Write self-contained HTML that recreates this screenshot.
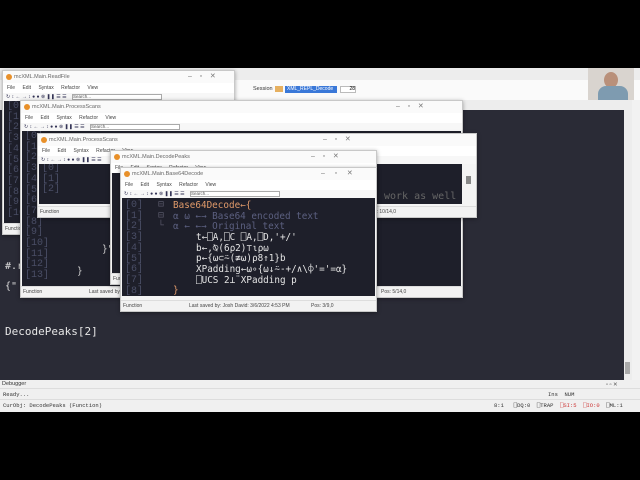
<!DOCTYPE html>
<html><head><meta charset="utf-8"><style>
*{margin:0;padding:0;box-sizing:border-box}
body{width:640px;height:480px;background:#000;position:relative;overflow:hidden;font-family:"Liberation Sans",sans-serif}
.a{position:absolute}
.win{position:absolute;background:#f4f4f4;border:1px solid #c8c8c8;box-shadow:0 1px 4px rgba(0,0,0,.35);overflow:hidden}
.tt{position:absolute;left:0;top:0;right:0;height:12px;background:#fafafa;font-size:5.5px;color:#666;line-height:12px;padding-left:11px}
.tt:before{content:"";position:absolute;left:3px;top:3px;width:6px;height:6px;border-radius:50%;background:#e8902a}
.ctl{position:absolute;top:0;font-size:7px;color:#777;line-height:12px}
.mn{position:absolute;left:0;top:12px;right:0;height:10px;background:#fff;font-size:5px;color:#444;line-height:10px;padding-left:4px;word-spacing:6px}
.tl{position:absolute;left:0;top:22px;right:0;height:8px;background:#f7f7f7;font-size:5px;color:#335;line-height:8px;padding-left:3px;white-space:nowrap;overflow:hidden}
.sr{display:inline-block;width:90px;height:6px;border:1px solid #aaa;background:#fff;vertical-align:middle;margin-left:4px;font-size:4.5px;line-height:4px;color:#555}
.cd{position:absolute;left:1px;right:1px;top:30px;background:#1e1f2a;overflow:hidden}
.st{position:absolute;left:0;right:0;bottom:0;height:11px;background:#f2f2f2;border-top:1px solid #ddd;font-size:5px;color:#444;line-height:11px;padding-left:2px}
.g{position:absolute;font-family:"Liberation Mono","DejaVu Sans Mono",monospace;font-size:10px;color:#4a4e66;line-height:10.7px;white-space:pre}
.c{position:absolute;font-family:"DejaVu Sans Mono","Liberation Mono",monospace;font-size:9.3px;line-height:10.7px;white-space:pre}
</style></head><body>
<!-- main app top area -->
<div class="a" style="left:0;top:68px;width:640px;height:344px;background:#ededed"></div>
<div class="a" style="left:0;top:80px;width:640px;height:20px;background:#fafafa"></div>
<div class="a" style="left:253px;top:86px;font-size:5.5px;color:#333">Session</div>
<div class="a" style="left:275px;top:86px;width:8px;height:6px;background:#e6b060"></div>
<div class="a" style="left:285px;top:86px;width:52px;height:7px;background:#3a78d8;font-size:5px;color:#fff;line-height:7px;padding-left:2px">XML_REPL_Decode</div>
<div class="a" style="left:340px;top:86px;width:16px;height:7px;border:1px solid #bbb;background:#fff;font-size:5px;line-height:5px;text-align:right">28</div>
<div class="a" style="left:588px;top:68px;width:46px;height:32px;background:#d9d4cf"></div>
<div class="a" style="left:604px;top:72px;width:14px;height:16px;border-radius:50%;background:#b9907a"></div>
<div class="a" style="left:598px;top:86px;width:30px;height:14px;border-radius:8px 8px 0 0;background:#7e9bb0"></div>
<!-- main dark session -->
<div class="a" style="left:0;top:110px;width:624px;height:270px;background:#2a2b36"></div>
<div class="a" style="left:625px;top:362px;width:5px;height:12px;background:#aaa"></div>
<div class="a" style="left:632px;top:100px;width:8px;height:280px;background:#f2f2f2"></div>
<div class="c" style="left:5px;top:262px;color:#ddd;font-size:10px">#.r</div>
<div class="c" style="left:5px;top:282px;color:#ddd;font-size:10px">{"</div>
<div class="c" style="left:5px;top:327px;color:#e6e6e6;font-size:11px">DecodePeaks[2]</div>
<!-- debugger bar -->
<div class="a" style="left:0;top:380px;width:640px;height:32px;background:#f0f0f0"></div>
<div class="a" style="left:2px;top:381px;font-size:5.5px;color:#333">Debugger</div>
<div class="a" style="left:0;top:388px;width:640px;height:1px;background:#ddd"></div>
<div class="a" style="left:3px;top:391px;font-size:5.5px;color:#333;font-family:'Liberation Mono',monospace">Ready...</div>
<div class="a" style="left:0;top:399px;width:640px;height:1px;background:#ddd"></div>
<div class="a" style="left:3px;top:402px;font-size:5.5px;color:#333;font-family:'Liberation Mono',monospace">CurObj: DecodePeaks (Function)</div>
<div class="a" style="left:548px;top:391px;font-size:5.5px;color:#333;font-family:'Liberation Mono',monospace">Ins &nbsp;NUM</div>
<div class="a" style="left:494px;top:402px;font-size:5.5px;color:#333;font-family:'Liberation Mono',monospace;white-space:pre">8:1   ⎕DQ:0  ⎕TRAP  <span style="color:#c33">⎕SI:5  ⎕IO:0</span>  ⎕ML:1</div>
<div class="a" style="left:606px;top:382px;font-size:5.5px;color:#555">▫ ▫ ✕</div>

<!-- W1 -->
<div class="win" style="left:2px;top:70px;width:233px;height:165px">
<div class="tt">mcXML.Main.ReadFile</div><div class="ctl" style="left:185px">–&nbsp;&nbsp;&nbsp;&nbsp;▫&nbsp;&nbsp;&nbsp;&nbsp;✕</div>
<div class="mn">File Edit Syntax Refactor View</div>
<div class="tl">↻ ↕ ← → ↕ ● ● ⊗ ❚❚ ☰ ☰ <span class="sr">Search...</span></div>
<div class="cd" style="height:122px"><div class="g" style="left:3px;top:1px">[0]
[1]
[2]
[3]
[4]
[5]
[6]
[7]
[8]
[9]
[10]</div></div>
<div class="st">Function</div></div>

<!-- W2 -->
<div class="win" style="left:20px;top:100px;width:443px;height:198px">
<div class="tt">mcXML.Main.ProcessScans</div><div class="ctl" style="left:375px">–&nbsp;&nbsp;&nbsp;&nbsp;▫&nbsp;&nbsp;&nbsp;&nbsp;✕</div>
<div class="mn">File Edit Syntax Refactor View</div>
<div class="tl">↻ ↕ ← → ↕ ● ● ⊗ ❚❚ ☰ ☰ <span class="sr">Search...</span></div>
<div class="cd" style="height:155px"><div class="g" style="left:3px;top:1px">[0]
[1]
[2]
[3]
[4]
[5]
[6]
[7]
[8]
[9]
[10]
[11]
[12]
[13]</div>
<div class="c" style="left:80px;top:114px;color:#ccc">}"</div>
<div class="c" style="left:55px;top:136px;color:#ccc">}</div></div>
<div class="st">Function<span style="position:absolute;left:68px">Last saved by:</span><span style="position:absolute;left:360px">Pos: 5/14,0</span></div></div>

<!-- W3 -->
<div class="win" style="left:37px;top:133px;width:440px;height:85px">
<div class="tt">mcXML.Main.ProcessScans</div><div class="ctl" style="left:285px">–&nbsp;&nbsp;&nbsp;&nbsp;▫&nbsp;&nbsp;&nbsp;&nbsp;✕</div>
<div class="mn">File Edit Syntax Refactor View</div>
<div class="tl">↻ ↕ ← → ↕ ● ● ⊗ ❚❚ ☰ ☰</div>
<div class="cd" style="height:40px;right:14px"><div class="g" style="left:3px;top:0px">[0]
[1]
[2]</div>
<div class="c" style="left:345px;top:28px;color:#666;font-size:10px">work as well</div></div>
<div class="a" style="right:5px;top:42px;width:5px;height:8px;background:#888"></div>
<div class="st">Function<span style="position:absolute;left:330px">Pos: 10/14,0</span></div></div>

<!-- W4 -->
<div class="win" style="left:110px;top:150px;width:267px;height:135px">
<div class="tt">mcXML.Main.DecodePeaks</div><div class="ctl" style="left:200px">–&nbsp;&nbsp;&nbsp;&nbsp;▫&nbsp;&nbsp;&nbsp;&nbsp;✕</div>
<div class="mn">File Edit Syntax Refactor View</div>
<div class="cd" style="top:22px;height:100px"></div>
<div class="st">Fun</div></div>

<!-- W5 -->
<div class="win" style="left:120px;top:167px;width:257px;height:145px">
<div class="tt">mcXML.Main.Base64Decode</div><div class="ctl" style="left:200px">–&nbsp;&nbsp;&nbsp;&nbsp;&nbsp;▫&nbsp;&nbsp;&nbsp;&nbsp;&nbsp;✕</div>
<div class="mn">File Edit Syntax Refactor View</div>
<div class="tl">↻ ↕ ← → ↕ ● ● ⊗ ❚❚ ☰ ☰ <span class="sr">Search...</span></div>
<div class="cd" style="height:98px"><div class="g" style="left:3px;top:3px">[0]
[1]
[2]
[3]
[4]
[5]
[6]
[7]
[8]</div>
<div class="g" style="left:36px;top:3px;color:#556">⊟
⊟
└</div>
<div class="c" style="left:51px;top:3px;color:#e09a6a">Base64Decode←{</div>
<div class="c" style="left:51px;top:13.7px;color:#5c6080">⍺ ⍵ ←→ Base64 encoded text
⍺ ← ←→ Original text</div>
<div class="c" style="left:74px;top:35px;color:#e4e4e4">t←⎕A,⎕C ⎕A,⎕D,'+/'
b←,⍉(6⍴2)⊤⍳⍴⍵
p←{⍵⊂⍨(≢⍵)⍴8↑1}b
XPadding←⍵∘{⍵↓⍨-+/∧\⌽'='=⍺}
⎕UCS 2⊥¨XPadding p</div>
<div class="c" style="left:51px;top:88px;color:#e09a6a">}</div></div>
<div class="st">Function<span style="position:absolute;left:68px">Last saved by: Josh David: 3/6/2022 4:53 PM</span><span style="position:absolute;left:190px">Pos: 3/9,0</span></div></div>
</body></html>
